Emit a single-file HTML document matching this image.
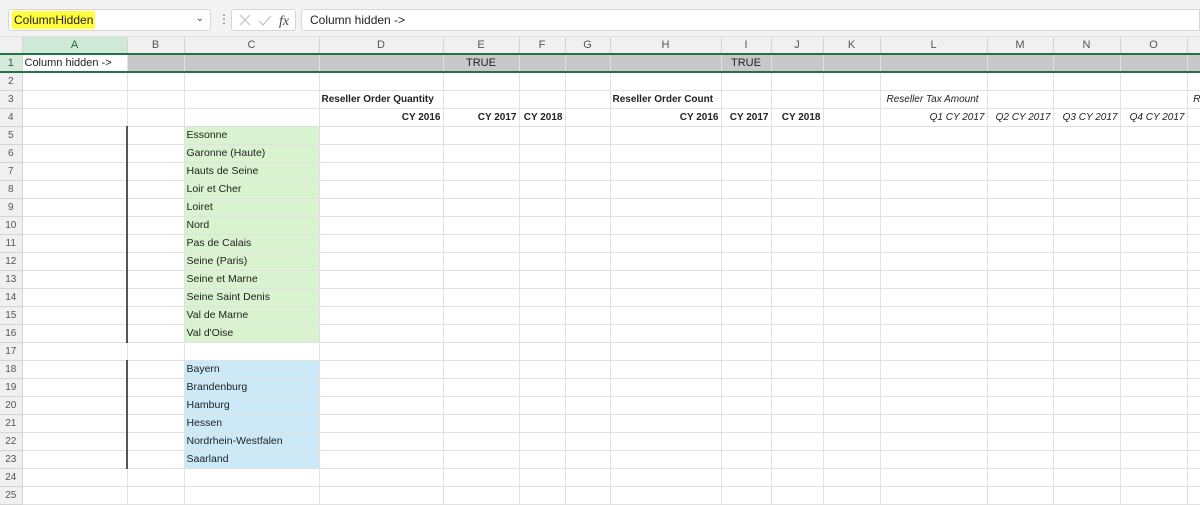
<!DOCTYPE html>
<html><head><meta charset="utf-8"><style>
*{box-sizing:border-box;margin:0;padding:0}
body{width:1200px;height:498px;overflow:hidden;background:#fff;font-family:"Liberation Sans",sans-serif;position:relative}
.top{position:absolute;left:0;top:0;width:1200px;height:37px;background:#f3f3f3;border-bottom:1px solid #e0e0e0}
.nb{position:absolute;left:8px;top:9px;width:203px;height:22px;background:#fff;border:1px solid #d6d6d6;border-radius:3px}
.nb span{position:absolute;left:3px;top:1px;background:#ffff40;padding:1px 2px;font-size:12px;color:#222;line-height:16px}
.fx{position:absolute;left:231px;top:9px;width:65px;height:22px;background:#fff;border:1px solid #d6d6d6;border-radius:3px;color:#aaa;font-size:13px}
.fb{position:absolute;left:301px;top:9px;width:899px;height:22px;background:#fff;border:1px solid #d6d6d6;border-radius:3px 0 0 3px;font-size:12px;padding:3px 8px;color:#222}
table{position:absolute;left:0;top:37px;width:1217px;border-collapse:collapse;table-layout:fixed;font-size:10px}
td{height:18px;border-right:1px solid #e1e1e1;border-bottom:1px solid #e1e1e1;padding:0 2px;white-space:nowrap;overflow:visible;color:#222;font-family:"Liberation Sans",sans-serif}
tr.h td{height:17px;background:#f0f0f0;text-align:center;color:#555;font-size:11px;border-color:#d4d4d4}
td.rh{background:#f0f0f0;text-align:center;color:#555;font-size:10px;border-color:#d4d4d4;padding:0}
tr.h td.sel{background:#cfe9d8;color:#1e6b3c;border-bottom:2px solid #217346}
tr.r1 td{background:#c8c8c8;border-top:2px solid #217346;border-bottom:2px solid #217346;font-size:11px}
tr.r1 td.a{background:#fff;font-size:11px}
tr.r1 td.rh{background:#d5eadb;color:#1e6b3c}
.g{background:#d9f2d0;font-size:10.5px}.bl{background:#cbe9f7;font-size:10.5px}
.b{font-weight:bold;text-align:right}.bh{font-weight:bold}
.i{font-style:italic;text-align:right}.il{font-style:italic}
.vl{border-right:2px solid #555!important}
</style></head><body>
<div class="top">
<div class="nb"><span>ColumnHidden</span><div style="position:absolute;right:6px;top:3px;font-size:10px;color:#444">&#8964;</div></div>
<div style="position:absolute;left:218px;top:12px;color:#666;font-size:12px">&#8942;</div>
<div class="fx"><svg width="65" height="20"><path d="M8 5l10 10M18 5L8 15" stroke="#bbb" fill="none"/><path d="M27 11l4 4 8-9" stroke="#bbb" fill="none"/><text x="47" y="15" font-family="Liberation Serif" font-style="italic" font-size="14" fill="#444">fx</text></svg></div>
<div class="fb">Column hidden -&gt;</div>
</div>
<table>
<colgroup><col style="width:22px"><col style="width:105px"><col style="width:57px"><col style="width:135px"><col style="width:124px"><col style="width:76px"><col style="width:46px"><col style="width:45px"><col style="width:111px"><col style="width:50px"><col style="width:52px"><col style="width:57px"><col style="width:107px"><col style="width:66px"><col style="width:67px"><col style="width:67px"><col style="width:30px"></colgroup>
<tr class="h"><td></td><td class="sel">A</td><td>B</td><td>C</td><td>D</td><td>E</td><td>F</td><td>G</td><td>H</td><td>I</td><td>J</td><td>K</td><td>L</td><td>M</td><td>N</td><td>O</td><td></td></tr>
<tr class="r1"><td class="rh">1</td><td class="a">Column hidden -&gt;</td><td></td><td></td><td></td><td style="text-align:center">TRUE</td><td></td><td></td><td></td><td style="text-align:center">TRUE</td><td></td><td></td><td></td><td></td><td></td><td></td><td></td></tr>
<tr><td class="rh">2</td><td></td><td></td><td></td><td></td><td></td><td></td><td></td><td></td><td></td><td></td><td></td><td></td><td></td><td></td><td></td><td></td></tr>
<tr><td class="rh">3</td><td></td><td></td><td></td><td class="bh">Reseller Order Quantity</td><td></td><td></td><td></td><td class="bh">Reseller Order Count</td><td></td><td></td><td></td><td class="il" style="padding-left:6px">Reseller Tax Amount</td><td></td><td></td><td></td><td class="il" style="text-align:right;padding-right:16px">R</td></tr>
<tr><td class="rh">4</td><td></td><td></td><td></td><td class="b">CY 2016</td><td class="b">CY 2017</td><td class="b">CY 2018</td><td></td><td class="b">CY 2016</td><td class="b">CY 2017</td><td class="b">CY 2018</td><td></td><td class="i">Q1 CY 2017</td><td class="i">Q2 CY 2017</td><td class="i">Q3 CY 2017</td><td class="i">Q4 CY 2017</td><td></td></tr>
<tr><td class="rh">5</td><td class="vl"></td><td></td><td class="g">Essonne</td><td></td><td></td><td></td><td></td><td></td><td></td><td></td><td></td><td></td><td></td><td></td><td></td><td></td></tr>
<tr><td class="rh">6</td><td class="vl"></td><td></td><td class="g">Garonne (Haute)</td><td></td><td></td><td></td><td></td><td></td><td></td><td></td><td></td><td></td><td></td><td></td><td></td><td></td></tr>
<tr><td class="rh">7</td><td class="vl"></td><td></td><td class="g">Hauts de Seine</td><td></td><td></td><td></td><td></td><td></td><td></td><td></td><td></td><td></td><td></td><td></td><td></td><td></td></tr>
<tr><td class="rh">8</td><td class="vl"></td><td></td><td class="g">Loir et Cher</td><td></td><td></td><td></td><td></td><td></td><td></td><td></td><td></td><td></td><td></td><td></td><td></td><td></td></tr>
<tr><td class="rh">9</td><td class="vl"></td><td></td><td class="g">Loiret</td><td></td><td></td><td></td><td></td><td></td><td></td><td></td><td></td><td></td><td></td><td></td><td></td><td></td></tr>
<tr><td class="rh">10</td><td class="vl"></td><td></td><td class="g">Nord</td><td></td><td></td><td></td><td></td><td></td><td></td><td></td><td></td><td></td><td></td><td></td><td></td><td></td></tr>
<tr><td class="rh">11</td><td class="vl"></td><td></td><td class="g">Pas de Calais</td><td></td><td></td><td></td><td></td><td></td><td></td><td></td><td></td><td></td><td></td><td></td><td></td><td></td></tr>
<tr><td class="rh">12</td><td class="vl"></td><td></td><td class="g">Seine (Paris)</td><td></td><td></td><td></td><td></td><td></td><td></td><td></td><td></td><td></td><td></td><td></td><td></td><td></td></tr>
<tr><td class="rh">13</td><td class="vl"></td><td></td><td class="g">Seine et Marne</td><td></td><td></td><td></td><td></td><td></td><td></td><td></td><td></td><td></td><td></td><td></td><td></td><td></td></tr>
<tr><td class="rh">14</td><td class="vl"></td><td></td><td class="g">Seine Saint Denis</td><td></td><td></td><td></td><td></td><td></td><td></td><td></td><td></td><td></td><td></td><td></td><td></td><td></td></tr>
<tr><td class="rh">15</td><td class="vl"></td><td></td><td class="g">Val de Marne</td><td></td><td></td><td></td><td></td><td></td><td></td><td></td><td></td><td></td><td></td><td></td><td></td><td></td></tr>
<tr><td class="rh">16</td><td class="vl"></td><td></td><td class="g">Val d'Oise</td><td></td><td></td><td></td><td></td><td></td><td></td><td></td><td></td><td></td><td></td><td></td><td></td><td></td></tr>
<tr><td class="rh">17</td><td></td><td></td><td></td><td></td><td></td><td></td><td></td><td></td><td></td><td></td><td></td><td></td><td></td><td></td><td></td><td></td></tr>
<tr><td class="rh">18</td><td class="vl"></td><td></td><td class="bl">Bayern</td><td></td><td></td><td></td><td></td><td></td><td></td><td></td><td></td><td></td><td></td><td></td><td></td><td></td></tr>
<tr><td class="rh">19</td><td class="vl"></td><td></td><td class="bl">Brandenburg</td><td></td><td></td><td></td><td></td><td></td><td></td><td></td><td></td><td></td><td></td><td></td><td></td><td></td></tr>
<tr><td class="rh">20</td><td class="vl"></td><td></td><td class="bl">Hamburg</td><td></td><td></td><td></td><td></td><td></td><td></td><td></td><td></td><td></td><td></td><td></td><td></td><td></td></tr>
<tr><td class="rh">21</td><td class="vl"></td><td></td><td class="bl">Hessen</td><td></td><td></td><td></td><td></td><td></td><td></td><td></td><td></td><td></td><td></td><td></td><td></td><td></td></tr>
<tr><td class="rh">22</td><td class="vl"></td><td></td><td class="bl">Nordrhein-Westfalen</td><td></td><td></td><td></td><td></td><td></td><td></td><td></td><td></td><td></td><td></td><td></td><td></td><td></td></tr>
<tr><td class="rh">23</td><td class="vl"></td><td></td><td class="bl">Saarland</td><td></td><td></td><td></td><td></td><td></td><td></td><td></td><td></td><td></td><td></td><td></td><td></td><td></td></tr>
<tr><td class="rh">24</td><td></td><td></td><td></td><td></td><td></td><td></td><td></td><td></td><td></td><td></td><td></td><td></td><td></td><td></td><td></td><td></td></tr>
<tr><td class="rh">25</td><td></td><td></td><td></td><td></td><td></td><td></td><td></td><td></td><td></td><td></td><td></td><td></td><td></td><td></td><td></td><td></td></tr>
</table>
</body></html>
